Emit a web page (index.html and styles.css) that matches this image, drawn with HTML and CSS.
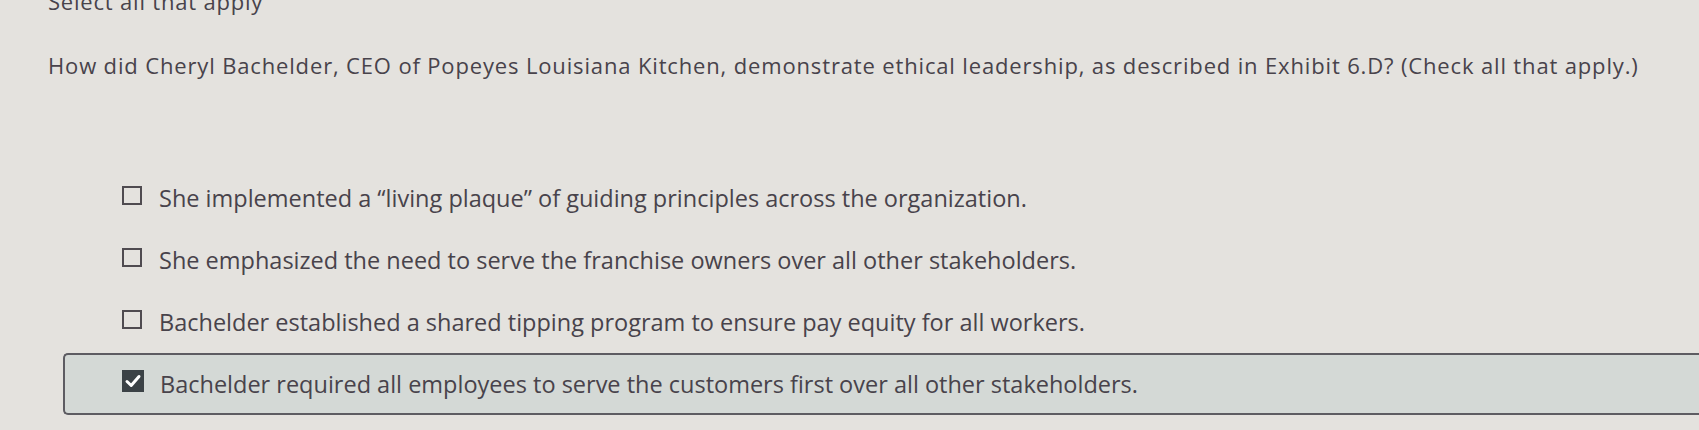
FILE: index.html
```html
<!DOCTYPE html>
<html>
<head>
<meta charset="utf-8">
<link rel="stylesheet" href="styles.css">
</head>
<body>
<div class="page">
  <div class="instr">Select all that apply</div>
  <div class="question">How did Cheryl Bachelder, CEO of Popeyes Louisiana Kitchen, demonstrate ethical leadership, as described in Exhibit 6.D? (Check all that apply.)</div>
  <div class="options">
    <div class="opt">
      <span class="box"></span>
      <span class="label">She implemented a “living plaque” of guiding principles across the organization.</span>
    </div>
    <div class="opt">
      <span class="box"></span>
      <span class="label">She emphasized the need to serve the franchise owners over all other stakeholders.</span>
    </div>
    <div class="opt">
      <span class="box"></span>
      <span class="label">Bachelder established a shared tipping program to ensure pay equity for all workers.</span>
    </div>
    <div class="opt selected">
      <span class="box checked"><svg viewBox="0 0 22 22" width="22" height="22"><path d="M5 11.5 L9.2 15.5 L17 6.5" fill="none" stroke="#fff" stroke-width="3" stroke-linecap="round" stroke-linejoin="round"/></svg></span>
      <span class="label">Bachelder required all employees to serve the customers first over all other stakeholders.</span>
    </div>
  </div>
</div>
</body>
</html>
```
FILE: styles.css
```css
html, body {
  margin: 0;
  padding: 0;
  background: #e4e2de;
  overflow: hidden;
}
.page {
  width: 1699px;
  height: 430px;
  font-family: "Open Sans", Lato, sans-serif;
  color: #48434b;
  padding-left: 48px;
  box-sizing: border-box;
}
.instr {
  font-size: 22px;
  line-height: 24px;
  margin-top: -11px;
  letter-spacing: 0.8px;
}
.question {
  font-size: 22px;
  line-height: 24px;
  margin-top: 40px;
  white-space: nowrap;
  letter-spacing: 0.85px;
}
.options {
  margin-top: 90px;
  margin-left: 15px;
}
.opt {
  height: 62px;
  display: flex;
  align-items: center;
  padding-left: 59px;
  box-sizing: border-box;
  font-size: 23.5px;
  white-space: nowrap;
}
.box {
  width: 20px;
  height: 19px;
  border: 2px solid #4f4b50;
  box-sizing: border-box;
  margin-right: 17px;
  flex: none;
  display: flex;
  align-items: center;
  justify-content: center;
  margin-top: -6px;
}
.box.checked {
  width: 22px;
  height: 22px;
  background: #3b4246;
  border: none;
  margin-right: 16px;
  margin-top: -6px;
}
.label {
  display: block;
}
.opt.selected {
  background: #d4d9d6;
  border: 2px solid #5d5c62;
  border-right: none;
  border-radius: 5px 0 0 5px;
  padding-left: 57px;
  width: 1640px;
}
```
